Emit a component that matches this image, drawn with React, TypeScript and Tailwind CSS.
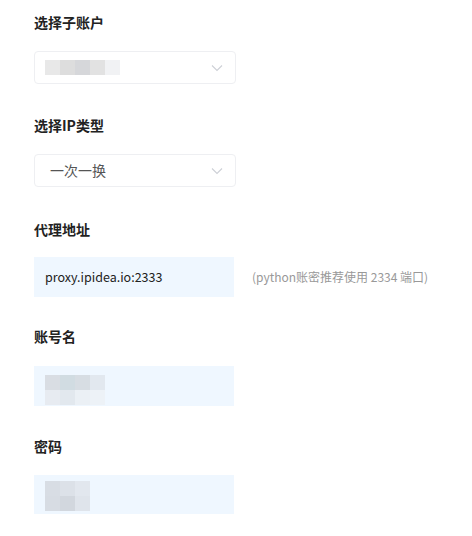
import React from "react";

const font = { fontFamily: '"Noto Sans CJK SC", "Noto Sans", sans-serif' };

const Chevron = () => (
  <svg width="12" height="8" viewBox="0 0 12 8" fill="none" className="absolute right-[12px] top-1/2 -translate-y-1/2">
    <path d="M1 1.5L6 6.5L11 1.5" stroke="#cdd0d6" strokeWidth="1.1" />
  </svg>
);

// mosaic blur blocks
const Mosaic = ({ rows }: { rows: string[][] }) => (
  <div className="flex flex-col">
    {rows.map((r, i) => (
      <div key={i} className="flex">
        {r.map((c, j) => (
          <div key={j} className="w-[15px] h-[15px]" style={{ background: c }} />
        ))}
      </div>
    ))}
  </div>
);

const Label = ({ children, className = "" }: { children: React.ReactNode; className?: string }) => (
  <div className={`h-[20px] leading-[20px] text-[14px] font-bold text-[#222] ${className}`}>{children}</div>
);

export default function App() {
  return (
    <div className="w-[472px] h-[536px] bg-white pl-[34px] pt-[12px]" style={font}>
      <Label>选择子账户</Label>
      <div className="relative mt-[19px] w-[202px] h-[33px] border border-[#eeeff2] rounded-[4px] flex items-center pl-[10px]">
        <Mosaic rows={[["#e8e8e8", "#dddddd", "#d6d7da", "#e2e2e2", "#f1f2f4"]]} />
        <Chevron />
      </div>

      <Label className="mt-[31px]">选择IP类型</Label>
      <div className="relative mt-[19px] w-[202px] h-[33px] border border-[#eeeff2] rounded-[4px] flex items-center pl-[15px] text-[14px] text-[#555]">
        一次一换
        <Chevron />
      </div>

      <Label className="mt-[32px]">代理地址</Label>
      <div className="mt-[18px] flex items-center">
        <div className="w-[200px] h-[40px] bg-[#eff7ff] flex items-center pl-[11px] text-[12.5px] text-[#222]">
          proxy.ipidea.io:2333
        </div>
        <span className="ml-[18px] text-[12px] text-[#999]">(python账密推荐使用 2334 端口)</span>
      </div>

      <Label className="mt-[29px]">账号名</Label>
      <div className="mt-[20px] w-[200px] h-[40px] bg-[#eff7ff] pl-[11px] pt-[9px]">
        <Mosaic
          rows={[
            ["#d9dde3", "#d1dce2", "#d7dde3", "#e2e8ef"],
            ["#e7ebf1", "#e2e8ee", "#ebf0f5", "#edf2f7"],
          ]}
        />
      </div>

      <Label className="mt-[30px]">密码</Label>
      <div className="mt-[19px] w-[200px] h-[39px] bg-[#eff7ff] pl-[11px] pt-[6px]">
        <Mosaic
          rows={[
            ["#d8dde4", "#dce1e8", "#e2e7ee"],
            ["#d7dce3", "#d2d7de", "#dfe4eb"],
          ]}
        />
      </div>
    </div>
  );
}
